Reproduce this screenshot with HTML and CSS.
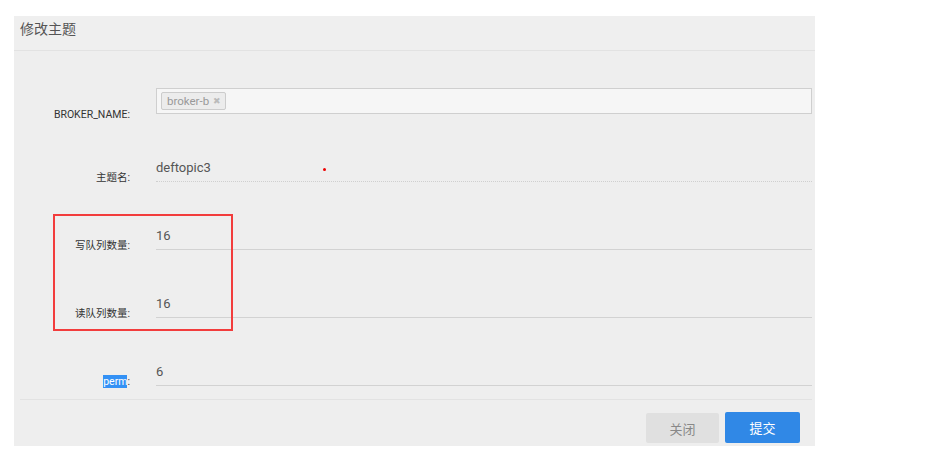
FILE: index.html
```html
<!DOCTYPE html>
<html lang="zh">
<head>
<meta charset="utf-8">
<link rel="stylesheet" href="styles.css">
</head>
<body>
<div class="dialog">
  <div class="dialog-header">修改主题</div>
  <div class="dialog-body">
    <div class="row first">
      <label class="lbl lbl-low">BROKER_NAME:</label>
      <div class="select-box"><span class="tag">broker-b <span class="tag-x">✖</span></span></div>
    </div>
    <div class="row">
      <label class="lbl">主题名:</label>
      <div class="value disabled">deftopic3</div>
    </div>
    <div class="row">
      <label class="lbl">写队列数量:</label>
      <div class="value">16</div>
    </div>
    <div class="row">
      <label class="lbl">读队列数量:</label>
      <div class="value">16</div>
    </div>
    <div class="row">
      <label class="lbl"><span class="sel">perm</span>:</label>
      <div class="value">6</div>
    </div>
  </div>
  <div class="dialog-footer">
    <button class="btn btn-close">关闭</button>
    <button class="btn btn-submit">提交</button>
  </div>
  <div class="red-box"></div>
  <div class="red-dot"></div>
</div>
</body>
</html>
```
FILE: styles.css
```css
html, body {
  margin: 0;
  padding: 0;
  background: #ffffff;
  font-family: Roboto, "Noto Sans CJK SC", sans-serif;
}
body {
  padding: 16px 0 0 14px;
}
.dialog {
  position: relative;
  width: 801px;
  height: 430px;
  background: #eeeeee;
  display: flex;
  flex-direction: column;
}
.dialog-header {
  height: 34px;
  line-height: 26px;
  padding-left: 6px;
  font-size: 14px;
  color: #555;
  border-bottom: 1px solid #e2e2e2;
  background: #efefef;
  box-sizing: content-box;
}
.dialog-body {
  margin: 0 3px 0 6px;
  padding-bottom: 13px;
}
.row {
  display: flex;
  align-items: flex-end;
  height: 68px;
}
.row.first {
  height: 63px;
}
.lbl {
  width: 110px;
  flex: none;
  text-align: right;
  font-size: 10.5px;
  line-height: 12px;
  color: #333;
  margin-right: 26px;
  margin-bottom: -2px;
}
.lbl-low {
  margin-bottom: -7px;
}
.sel {
  background: #3391f5;
  color: #fff;
}
.select-box {
  flex: 1;
  height: 24px;
  border: 1px solid #cfcfcf;
  background: #f6f6f6;
  display: flex;
  align-items: center;
  padding-left: 4px;
}
.tag {
  display: inline-flex;
  align-items: center;
  height: 16px;
  padding: 0 4px 0 5px;
  border: 1px solid #cccccc;
  border-radius: 2px;
  background: #ececec;
  font-size: 11.5px;
  color: #999;
}
.tag-x {
  margin-left: 4px;
  color: #bbb;
  font-size: 9px;
}
.value {
  flex: 1;
  height: 26px;
  line-height: 26px;
  font-size: 13px;
  color: #555;
  border-bottom: 1px solid #d2d2d2;
  box-sizing: content-box;
}
.value.disabled {
  border-bottom: 1px dotted #cfcfcf;
}
.dialog-footer {
  margin: 0 3px 0 6px;
  border-top: 1px solid #e2e2e2;
  padding: 12px 12px 0 0;
  display: flex;
  justify-content: flex-end;
  gap: 6px;
}
.btn {
  height: 31px;
  border: none;
  border-radius: 2px;
  font-family: "Noto Sans CJK SC", sans-serif;
  font-size: 13px;
  padding: 0;
}
.btn-close {
  width: 73px;
  height: 30px;
  margin-top: 1px;
  background: #e0e0e0;
  color: #888;
}
.btn-submit {
  width: 75px;
  background: #3088e6;
  color: #fff;
}
.red-box {
  position: absolute;
  left: 39px;
  top: 198px;
  width: 176px;
  height: 113px;
  border: 2px solid #f23c3c;
}
.red-dot {
  position: absolute;
  left: 309px;
  top: 152px;
  width: 3px;
  height: 3px;
  border-radius: 50%;
  background: #e00;
}
```
